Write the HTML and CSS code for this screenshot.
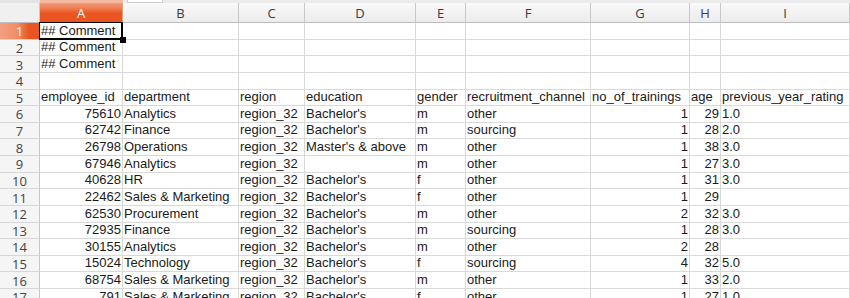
FILE: index.html
```html
<!DOCTYPE html>
<html>
<head>
<meta charset="utf-8">
<link rel="stylesheet" href="styles.css">
</head>
<body>
<div class="topstrip"><span class="ts-corner"></span><span class="ts-a"></span><span class="ts-box"></span></div>
<div class="sheet">
  <div class="ch corner"></div>
  <div class="ch sel">A</div>
  <div class="ch">B</div>
  <div class="ch">C</div>
  <div class="ch">D</div>
  <div class="ch">E</div>
  <div class="ch">F</div>
  <div class="ch">G</div>
  <div class="ch">H</div>
  <div class="ch">I</div>

  <div class="rh sel">1</div><div class="c active">## Comment</div><div class="c"></div><div class="c"></div><div class="c"></div><div class="c"></div><div class="c"></div><div class="c"></div><div class="c"></div><div class="c"></div>
  <div class="rh">2</div><div class="c">## Comment</div><div class="c"></div><div class="c"></div><div class="c"></div><div class="c"></div><div class="c"></div><div class="c"></div><div class="c"></div><div class="c"></div>
  <div class="rh">3</div><div class="c">## Comment</div><div class="c"></div><div class="c"></div><div class="c"></div><div class="c"></div><div class="c"></div><div class="c"></div><div class="c"></div><div class="c"></div>
  <div class="rh">4</div><div class="c"></div><div class="c"></div><div class="c"></div><div class="c"></div><div class="c"></div><div class="c"></div><div class="c"></div><div class="c"></div><div class="c"></div>
  <div class="rh">5</div><div class="c">employee_id</div><div class="c">department</div><div class="c">region</div><div class="c">education</div><div class="c">gender</div><div class="c">recruitment_channel</div><div class="c">no_of_trainings</div><div class="c">age</div><div class="c">previous_year_rating</div>
  <div class="rh">6</div><div class="c n">75610</div><div class="c">Analytics</div><div class="c">region_32</div><div class="c">Bachelor's</div><div class="c">m</div><div class="c">other</div><div class="c n">1</div><div class="c n">29</div><div class="c">1.0</div>
  <div class="rh">7</div><div class="c n">62742</div><div class="c">Finance</div><div class="c">region_32</div><div class="c">Bachelor's</div><div class="c">m</div><div class="c">sourcing</div><div class="c n">1</div><div class="c n">28</div><div class="c">2.0</div>
  <div class="rh">8</div><div class="c n">26798</div><div class="c">Operations</div><div class="c">region_32</div><div class="c">Master's &amp; above</div><div class="c">m</div><div class="c">other</div><div class="c n">1</div><div class="c n">38</div><div class="c">3.0</div>
  <div class="rh">9</div><div class="c n">67946</div><div class="c">Analytics</div><div class="c">region_32</div><div class="c"></div><div class="c">m</div><div class="c">other</div><div class="c n">1</div><div class="c n">27</div><div class="c">3.0</div>
  <div class="rh">10</div><div class="c n">40628</div><div class="c">HR</div><div class="c">region_32</div><div class="c">Bachelor's</div><div class="c">f</div><div class="c">other</div><div class="c n">1</div><div class="c n">31</div><div class="c">3.0</div>
  <div class="rh">11</div><div class="c n">22462</div><div class="c">Sales &amp; Marketing</div><div class="c">region_32</div><div class="c">Bachelor's</div><div class="c">f</div><div class="c">other</div><div class="c n">1</div><div class="c n">29</div><div class="c"></div>
  <div class="rh">12</div><div class="c n">62530</div><div class="c">Procurement</div><div class="c">region_32</div><div class="c">Bachelor's</div><div class="c">m</div><div class="c">other</div><div class="c n">2</div><div class="c n">32</div><div class="c">3.0</div>
  <div class="rh">13</div><div class="c n">72935</div><div class="c">Finance</div><div class="c">region_32</div><div class="c">Bachelor's</div><div class="c">m</div><div class="c">sourcing</div><div class="c n">1</div><div class="c n">28</div><div class="c">3.0</div>
  <div class="rh">14</div><div class="c n">30155</div><div class="c">Analytics</div><div class="c">region_32</div><div class="c">Bachelor's</div><div class="c">m</div><div class="c">other</div><div class="c n">2</div><div class="c n">28</div><div class="c"></div>
  <div class="rh">15</div><div class="c n">15024</div><div class="c">Technology</div><div class="c">region_32</div><div class="c">Bachelor's</div><div class="c">f</div><div class="c">sourcing</div><div class="c n">4</div><div class="c n">32</div><div class="c">5.0</div>
  <div class="rh">16</div><div class="c n">68754</div><div class="c">Sales &amp; Marketing</div><div class="c">region_32</div><div class="c">Bachelor's</div><div class="c">m</div><div class="c">other</div><div class="c n">1</div><div class="c n">33</div><div class="c">2.0</div>
  <div class="rh">17</div><div class="c n">791</div><div class="c">Sales &amp; Marketing</div><div class="c">region_32</div><div class="c">Bachelor's</div><div class="c">f</div><div class="c">other</div><div class="c n">1</div><div class="c n">27</div><div class="c">1.0</div>
</div>
</body>
</html>
```
FILE: styles.css
```css
html, body {
  margin: 0;
  padding: 0;
  background: #ffffff;
  overflow: hidden;
  width: 850px;
  height: 298px;
}

.topstrip {
  height: 3px;
  display: flex;
  background: #ececec;
}
.ts-corner { width: 40px; background: #e4e4e4; }
.ts-a { width: 83px; background: #f3b8a0; }
.ts-box { width: 34px; margin-left: 4px; background: #ffffff; border: 1px solid #cfcfcf; border-top: none; }

.sheet {
  display: grid;
  grid-template-columns: 40px 83px 116px 66px 111px 50px 125px 99px 31px 129px;
  grid-template-rows: 20px repeat(17, 16.63px);
  font-family: "Liberation Sans", Arial, sans-serif;
  font-size: 13px;
  color: #1a1a1a;
}

.ch {
  background: linear-gradient(#f9f9f9, #ececec);
  border-right: 1px solid #c8c8c8;
  border-bottom: 1px solid #bdbdbd;
  display: flex;
  align-items: center;
  justify-content: center;
  font-family: "Open Sans", "DejaVu Sans", sans-serif;
  font-size: 13px;
  color: #3c3c3c;
  padding-top: 1px;
  box-sizing: border-box;
}
.ch.corner { background: #f0f0f0; }
.ch.sel {
  background: linear-gradient(#f29b78 0%, #ee7a4e 30%, #e95420 55%, #e95420 100%);
  color: #ffffff;
  border-right-color: #d9a18a;
}

.rh {
  background: #f5f5f5;
  border-right: 1px solid #c8c8c8;
  border-bottom: 1px solid #d7d7d7;
  display: flex;
  align-items: center;
  justify-content: center;
  font-family: "Open Sans", "DejaVu Sans", sans-serif;
  font-size: 13px;
  color: #444444;
  box-sizing: border-box;
  padding-top: 1px;
}
.rh.sel {
  background: linear-gradient(90deg, #f3a080 0%, #f08c66 45%, #e95420 75%, #e95420 100%);
  color: #ffffff;
}

.c {
  border-right: 1px solid #d9d9d9;
  border-bottom: 1px solid #d9d9d9;
  box-sizing: border-box;
  padding: 0 1px 0 1px;
  white-space: nowrap;
  overflow: hidden;
  line-height: 16px;
  display: flex;
  align-items: flex-end;
}
.c.n { justify-content: flex-end; }

.c.active {
  position: relative;
  overflow: visible;
}
.c.active::before {
  content: "";
  position: absolute;
  left: -1px;
  top: -1px;
  right: -1px;
  bottom: -1px;
  border: 1px solid #000;
  border-right-width: 2px;
  border-bottom-width: 2px;
  pointer-events: none;
}
.c.active::after {
  content: "";
  position: absolute;
  right: -4px;
  bottom: -4px;
  width: 6px;
  height: 6px;
  background: #000;
}
```
